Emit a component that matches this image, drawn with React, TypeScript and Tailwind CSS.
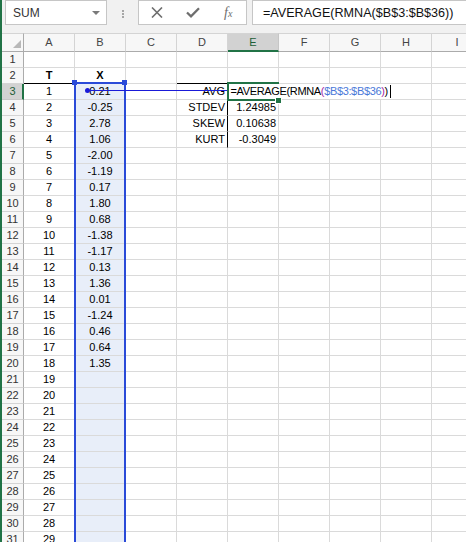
import React from 'react';

const bVals: Record<number, string> = {
  3: '0.21', 4: '-0.25', 5: '2.78', 6: '1.06', 7: '-2.00', 8: '-1.19', 9: '0.17', 10: '1.80',
  11: '0.68', 12: '-1.38', 13: '-1.17', 14: '0.13', 15: '1.36', 16: '0.01', 17: '-1.24',
  18: '0.46', 19: '0.64', 20: '1.35',
};
const dLabels: Record<number, string> = { 3: 'AVG', 4: 'STDEV', 5: 'SKEW', 6: 'KURT' };
const eVals: Record<number, string> = { 4: '1.24985', 5: '0.10638', 6: '-0.3049' };
const cols = ['A', 'B', 'C', 'D', 'E', 'F', 'G', 'H', 'I'];

function Cell({ r, c }: { r: number; c: string }) {
  let content: React.ReactNode = null;
  let justify = 'justify-center';
  let extra = '';
  if (c === 'A') {
    if (r === 2) content = <span className="font-bold">T</span>;
    else if (r >= 3) content = String(r - 2);
    if (r === 2) extra += ' border-b-black';
  }
  if (c === 'B') {
    if (r === 2) content = <span className="font-bold">X</span>;
    else if (bVals[r]) content = bVals[r];
    if (r >= 3) extra += ' bg-[#e8eef9]';
    if (r === 2) extra += ' border-b-black';
  }
  if (c === 'D') {
    justify = 'justify-end pr-[2px]';
    if (dLabels[r]) content = dLabels[r];
    if (r === 2) extra += ' border-b-black';
    if (r >= 3 && r <= 6) extra += ' border-r-black';
  }
  if (c === 'E') {
    justify = 'justify-end pr-[2px]';
    if (eVals[r]) content = eVals[r];
    if (r === 2) extra += ' border-b-black';
  }
  return (
    <div className={`border-r border-b border-[#dadada] flex items-center text-[11px] leading-none whitespace-nowrap ${justify}${extra}`}>
      {content}
    </div>
  );
}

export default function App() {
  const rows = Array.from({ length: 31 }, (_, i) => i + 1);
  return (
    <div className="w-[466px] h-[542px] overflow-hidden bg-white border-l-2 border-[#217346] font-['Liberation_Sans',Arial,sans-serif] text-black">
      {/* formula bar area */}
      <div className="h-[33px] bg-[#f1f1f1] flex items-start">
        <div className="ml-[3px] w-[102px] h-[25px] shrink-0 bg-white border border-[#c6c6c6] flex items-center justify-between pl-[7px] pr-[6px]">
          <span className="text-[12px] text-[#333]">SUM</span>
          <svg width="8" height="4" viewBox="0 0 8 4"><path d="M0 0h8L4 4z" fill="#7a7a7a" /></svg>
        </div>
        <div className="ml-[15px] mt-[10px] flex flex-col gap-[1px] shrink-0">
          <div className="w-[2px] h-[2px] bg-[#a6a6a6]" />
          <div className="w-[2px] h-[2px] bg-[#a6a6a6]" />
          <div className="w-[2px] h-[2px] bg-[#a6a6a6]" />
        </div>
        <div className="ml-[14px] w-[109px] h-[25px] shrink-0 bg-white border border-[#c6c6c6] flex items-center">
          <div className="w-[36px] flex justify-center">
            <svg width="12" height="11" viewBox="0 0 12 11">
              <path d="M1 0.5L11 10.5M11 0.5L1 10.5" stroke="#6e6e6e" strokeWidth="1.6" fill="none" />
            </svg>
          </div>
          <div className="w-[36px] flex justify-center">
            <svg width="14" height="11" viewBox="0 0 14 11">
              <path d="M1 5.5L5 9.3L13 1.3" stroke="#6e6e6e" strokeWidth="2.3" fill="none" />
            </svg>
          </div>
          <div className="w-[36px] flex justify-center">
            <span className="italic font-['Liberation_Serif',serif] text-[14px] leading-none text-[#6e6e6e]">
              f<span className="text-[10px]">x</span>
            </span>
          </div>
        </div>
        <div className="ml-[5px] w-[230px] h-[25px] shrink-0 bg-white border border-[#c6c6c6] flex items-center pl-[10px] pt-[1px]">
          <span className="text-[12.6px] text-[#111] whitespace-nowrap">=AVERAGE(RMNA($B$3:$B$36))</span>
        </div>
      </div>

      {/* sheet */}
      <div className="relative">
        <div className="grid grid-cols-[22px_repeat(9,51px)] grid-rows-[19px] auto-rows-[16px]">
          <div className="relative bg-[#f7f7f7] border-t border-t-[#d4d4d4] border-r border-b border-[#ababab]">
            <svg className="absolute right-[2px] bottom-[3px]" width="8" height="8" viewBox="0 0 8 8">
              <path d="M8 0V8H0z" fill="#b8b8b8" />
            </svg>
          </div>
          {cols.map((c) =>
            c === 'E' ? (
              <div key={c} className="bg-[#d2d2d2] border-t border-t-[#d4d4d4] border-r border-r-[#c6c6c6] border-b-2 border-b-[#217346] flex items-center justify-center text-[11px] text-[#1d5e38]">
                {c}
              </div>
            ) : (
              <div key={c} className="bg-[#f7f7f7] border-t border-t-[#d4d4d4] border-r border-r-[#d4d4d4] border-b border-b-[#ababab] flex items-center justify-center text-[11px] text-[#444]">
                {c}
              </div>
            )
          )}
          {rows.map((r) => (
            <React.Fragment key={r}>
              {r === 3 ? (
                <div className="bg-[#d2d2d2] border-b border-b-[#c6c6c6] border-r-2 border-r-[#217346] flex items-center justify-center text-[11px] text-[#1d5e38] pl-[1px]">
                  {r}
                </div>
              ) : (
                <div className="bg-[#f7f7f7] border-b border-b-[#d4d4d4] border-r border-r-[#ababab] flex items-center justify-center text-[11px] text-[#333]">
                  {r}
                </div>
              )}
              {cols.map((c) => (
                <Cell key={c} r={r} c={c} />
              ))}
            </React.Fragment>
          ))}
        </div>

        {/* range selection B3:B36 */}
        <div className="absolute left-[72px] top-[49px] w-[52px] h-[600px] border-2 border-[#2a4ad8]" />
        <div className="absolute left-[70px] top-[47px] w-[5px] h-[5px] bg-[#2a4ad8]" />
        <div className="absolute left-[120px] top-[47px] w-[5px] h-[5px] bg-[#2a4ad8]" />

        {/* trace arrow */}
        <div className="absolute left-[86px] top-[56.5px] w-[139px] h-[1.6px] bg-[#1a1ad8]" />
        <div className="absolute left-[83px] top-[55px] w-[5px] h-[5px] rounded-full bg-[#1a1ad8]" />

        {/* active cell E3 */}
        <div className="absolute left-[225px] top-[49px] w-[52px] h-[19px] border-2 border-[#217346]" />
        <div className="absolute left-[227px] top-[51px] w-[168px] h-[15px] bg-white flex items-center pl-[1.5px] text-[11px] leading-none whitespace-nowrap tracking-[-0.35px]">
          <span>=AVERAGE(RMNA</span>
          <span className="text-[#a326a8]">(</span>
          <span className="text-[#4a78d8]">$B$3:$B$36</span>
          <span className="text-[#a326a8]">)</span>
          <span>)</span>
          <span className="inline-block ml-[2.5px] w-[1px] h-[13px] bg-black" />
        </div>
        <div className="absolute left-[273px] top-[64px] w-[7px] h-[7px] bg-white p-[1px]">
          <div className="w-full h-full bg-[#217346]" />
        </div>
      </div>
    </div>
  );
}
